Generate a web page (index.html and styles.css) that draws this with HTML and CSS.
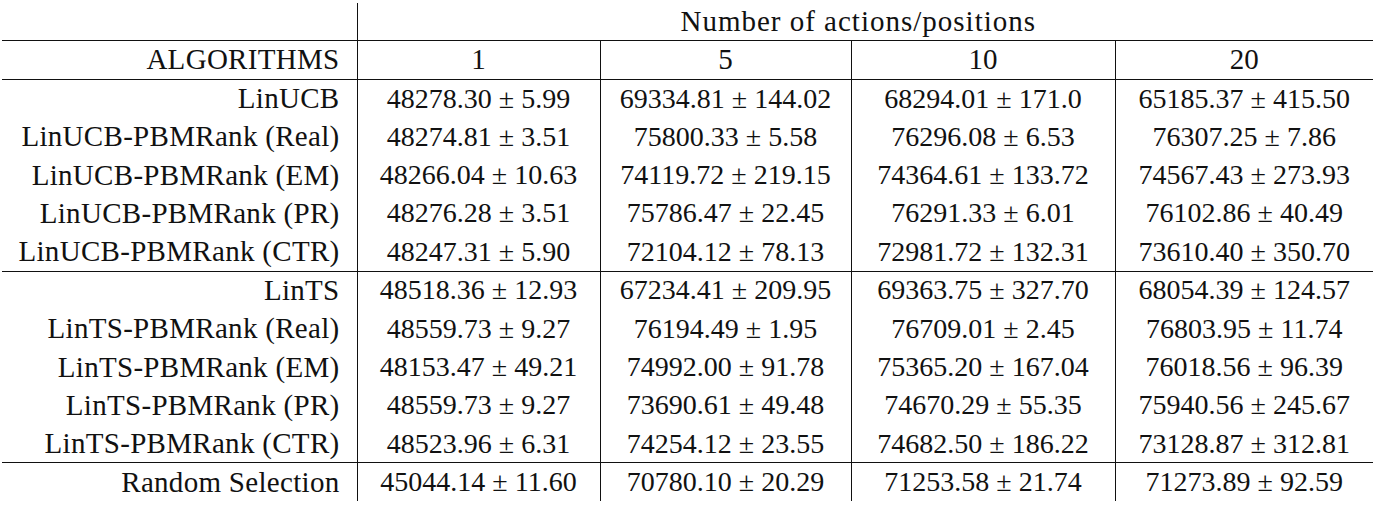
FILE: index.html
```html
<!DOCTYPE html>
<html lang="en">
<head>
  <meta charset="UTF-8" />
  <title>Number of actions/positions</title>
  <link rel="stylesheet" href="styles.css">
</head>
<body>

  <table class="results">
    <colgroup>
      <col class="c-name">
      <col class="c-1">
      <col class="c-5">
      <col class="c-10">
      <col class="c-20">
    </colgroup>
    <tr class="top">
      <td class="name"></td>
      <td colspan="4" class="span">Number of actions/positions</td>
    </tr>
    <tr class="rule head">
      <td class="name">ALGORITHMS</td>
      <td>1</td><td>5</td><td>10</td><td>20</td>
    </tr>
    <tr class="rule">
      <td class="name">LinUCB</td>
      <td>48278.30 ± 5.99</td><td>69334.81 ± 144.02</td><td>68294.01 ± 171.0</td><td>65185.37 ± 415.50</td>
    </tr>
    <tr>
      <td class="name">LinUCB-PBMRank (Real)</td>
      <td>48274.81 ± 3.51</td><td>75800.33 ± 5.58</td><td>76296.08 ± 6.53</td><td>76307.25 ± 7.86</td>
    </tr>
    <tr>
      <td class="name">LinUCB-PBMRank (EM)</td>
      <td>48266.04 ± 10.63</td><td>74119.72 ± 219.15</td><td>74364.61 ± 133.72</td><td>74567.43 ± 273.93</td>
    </tr>
    <tr>
      <td class="name">LinUCB-PBMRank (PR)</td>
      <td>48276.28 ± 3.51</td><td>75786.47 ± 22.45</td><td>76291.33 ± 6.01</td><td>76102.86 ± 40.49</td>
    </tr>
    <tr>
      <td class="name">LinUCB-PBMRank (CTR)</td>
      <td>48247.31 ± 5.90</td><td>72104.12 ± 78.13</td><td>72981.72 ± 132.31</td><td>73610.40 ± 350.70</td>
    </tr>
    <tr class="rule">
      <td class="name">LinTS</td>
      <td>48518.36 ± 12.93</td><td>67234.41 ± 209.95</td><td>69363.75 ± 327.70</td><td>68054.39 ± 124.57</td>
    </tr>
    <tr>
      <td class="name">LinTS-PBMRank (Real)</td>
      <td>48559.73 ± 9.27</td><td>76194.49 ± 1.95</td><td>76709.01 ± 2.45</td><td>76803.95 ± 11.74</td>
    </tr>
    <tr>
      <td class="name">LinTS-PBMRank (EM)</td>
      <td>48153.47 ± 49.21</td><td>74992.00 ± 91.78</td><td>75365.20 ± 167.04</td><td>76018.56 ± 96.39</td>
    </tr>
    <tr>
      <td class="name">LinTS-PBMRank (PR)</td>
      <td>48559.73 ± 9.27</td><td>73690.61 ± 49.48</td><td>74670.29 ± 55.35</td><td>75940.56 ± 245.67</td>
    </tr>
    <tr>
      <td class="name">LinTS-PBMRank (CTR)</td>
      <td>48523.96 ± 6.31</td><td>74254.12 ± 23.55</td><td>74682.50 ± 186.22</td><td>73128.87 ± 312.81</td>
    </tr>
    <tr class="rule">
      <td class="name">Random Selection</td>
      <td>45044.14 ± 11.60</td><td>70780.10 ± 20.29</td><td>71253.58 ± 21.74</td><td>71273.89 ± 92.59</td>
    </tr>
  </table>

</body>
</html>
```

FILE: styles.css
```css
* { box-sizing: border-box; }

body {
  margin: 0;
  background: #fff;
  color: #111;
  font-family: 'Liberation Serif', 'Times New Roman', serif;
}

.results {
  border-collapse: collapse;
  table-layout: fixed;
  width: 1371px;
  margin: 3px 0 0 2px;
  font-size: 28px;
}

.c-name { width: 355px; }
.c-1 { width: 243px; }
.c-5 { width: 251px; }
.c-10 { width: 264px; }
.c-20 { width: 258px; }

.results td {
  height: 38.4px;
  padding: 0 6px;
  text-align: center;
  vertical-align: middle;
  white-space: nowrap;
  line-height: 1;
}

.results td + td { border-left: 1px solid #111; }

.results .name {
  text-align: right;
  padding-right: 17px;
  font-size: 29px;
  letter-spacing: 0.3px;
}

.results .head td,
.results .span {
  font-size: 29px;
}

.results .span {
  letter-spacing: 1px;
  padding-right: 20px;
}

.results .top td { height: 37.7px; }

.results .rule td { border-top: 1px solid #111; }
```
